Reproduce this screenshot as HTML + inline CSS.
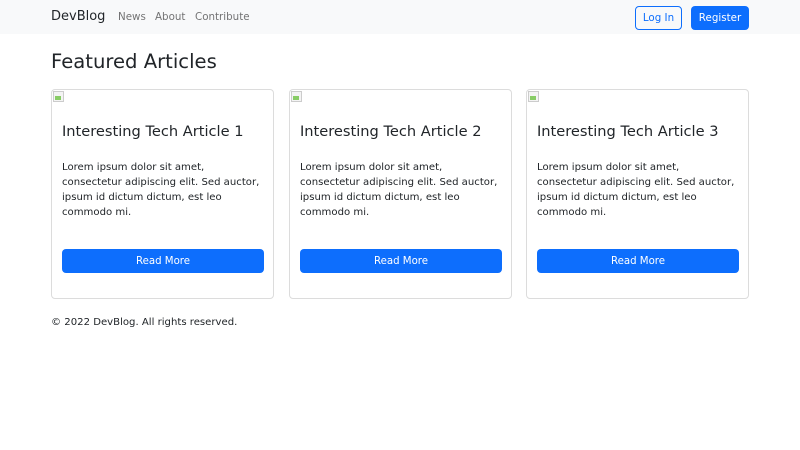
<!DOCTYPE html>
<html><head><meta charset="utf-8"><style>
*{box-sizing:border-box;margin:0;padding:0}
body{width:800px;height:450px;background:#fff;font-family:"DejaVu Sans","Liberation Sans",sans-serif;color:#212529;position:relative;overflow:hidden}
.nav{position:absolute;left:0;top:0;width:800px;height:34px;background:#f8f9fa}
.abs{position:absolute;white-space:nowrap}
.brand{left:51px;top:9px;font-size:13px;color:#212529}
.link{top:11px;font-size:10.3px;color:rgba(0,0,0,.55)}
.btn{position:absolute;border-radius:4px;font-size:10.3px;text-align:center;line-height:22px}
h1{position:absolute;left:51px;top:50px;font-size:19.6px;font-weight:400}
.card{position:absolute;top:89px;width:223px;height:210px;border:1px solid #dcdcdc;border-radius:4px}
.img{position:absolute;left:1px;top:1px;width:11px;height:11px;border:1px solid #ccc;background:#f4f4f4}
.img:after{content:"";position:absolute;left:1px;bottom:1px;width:6px;height:4px;background:#8c6}
.t{position:absolute;left:10px;top:33px;font-size:14.6px}
.p{position:absolute;left:10px;top:70px;width:205px;font-size:10.1px;line-height:15px}
.rb{position:absolute;left:10px;top:159px;width:202px;height:24px;background:#0d6efd;color:#fff;border-radius:4px;font-size:10.2px;text-align:center;line-height:26px}
.foot{left:51px;top:317px;font-size:10.1px}
</style></head><body>
<div class="nav"></div>
<div class="abs brand">DevBlog</div>
<div class="abs link" style="left:118px">News</div>
<div class="abs link" style="left:155px">About</div>
<div class="abs link" style="left:195px">Contribute</div>
<div class="btn" style="left:635px;top:6px;width:47px;height:24px;border:1px solid #0d6efd;color:#0d6efd">Log In</div>
<div class="btn" style="left:691px;top:6px;width:58px;height:24px;background:#0d6efd;color:#fff;line-height:24px">Register</div>
<h1>Featured Articles</h1>
<div class="card" style="left:51px"><div class="img"></div><div class="t">Interesting Tech Article 1</div><div class="p">Lorem ipsum dolor sit amet, consectetur adipiscing elit. Sed auctor, ipsum id dictum dictum, est leo commodo mi.</div><div class="rb">Read More</div></div>
<div class="card" style="left:289px"><div class="img"></div><div class="t">Interesting Tech Article 2</div><div class="p">Lorem ipsum dolor sit amet, consectetur adipiscing elit. Sed auctor, ipsum id dictum dictum, est leo commodo mi.</div><div class="rb">Read More</div></div>
<div class="card" style="left:526px"><div class="img"></div><div class="t">Interesting Tech Article 3</div><div class="p">Lorem ipsum dolor sit amet, consectetur adipiscing elit. Sed auctor, ipsum id dictum dictum, est leo commodo mi.</div><div class="rb">Read More</div></div>
<div class="abs foot">© 2022 DevBlog. All rights reserved.</div>
</body></html>
